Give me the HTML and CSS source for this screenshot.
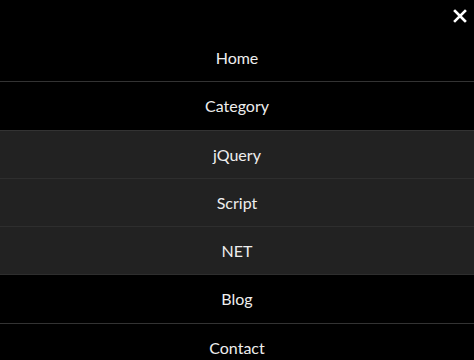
FILE: index.html
```html
<!DOCTYPE html>
<html>
<head>
    <title>Menu</title>
    <link rel="stylesheet" href="styles.css">
</head>
<body>
    <div id="side-menu">
        <div id="menu-top">
            <button id="close-menu" aria-label="Close">
                <svg width="14" height="14" viewBox="0 0 14 14">
                    <path d="M2 2 L12 12 M12 2 L2 12" stroke="#fff" stroke-width="2.6" stroke-linecap="square"/>
                </svg>
            </button>
        </div>
        <ul id="menu-list">
            <li><a href="#">Home</a></li>
            <li><a href="#">Category</a></li>
            <li class="sub"><a href="#">jQuery</a></li>
            <li class="sub"><a href="#">Script</a></li>
            <li class="sub"><a href="#">NET</a></li>
            <li><a href="#">Blog</a></li>
            <li><a href="#">Contact</a></li>
        </ul>
    </div>
</body>
</html>
```

FILE: styles.css
```css
body {
    margin: 0;
    background-color: #000;
    font-family: Lato, "Open Sans", sans-serif;
}

/* Full screen side menu */
#side-menu {
    background-color: #000;
    min-height: 360px;
}

#menu-top {
    height: 34px;
    display: flex;
    justify-content: flex-end;
    align-items: flex-start;
}

#close-menu {
    background: none;
    border: none;
    padding: 9px 7px 0 0;
    cursor: pointer;
}

#menu-list {
    list-style: none;
    margin: 0;
    padding: 0;
}

#menu-list li {
    border-bottom: 1px solid #333;
}

#menu-list li.sub {
    background-color: #222;
    border-bottom-color: #2e2e2e;
}

#menu-list a {
    display: block;
    height: 47.3px;
    line-height: 47px;
    text-align: center;
    color: #eee;
    font-size: 16px;
    text-decoration: none;
}
```
